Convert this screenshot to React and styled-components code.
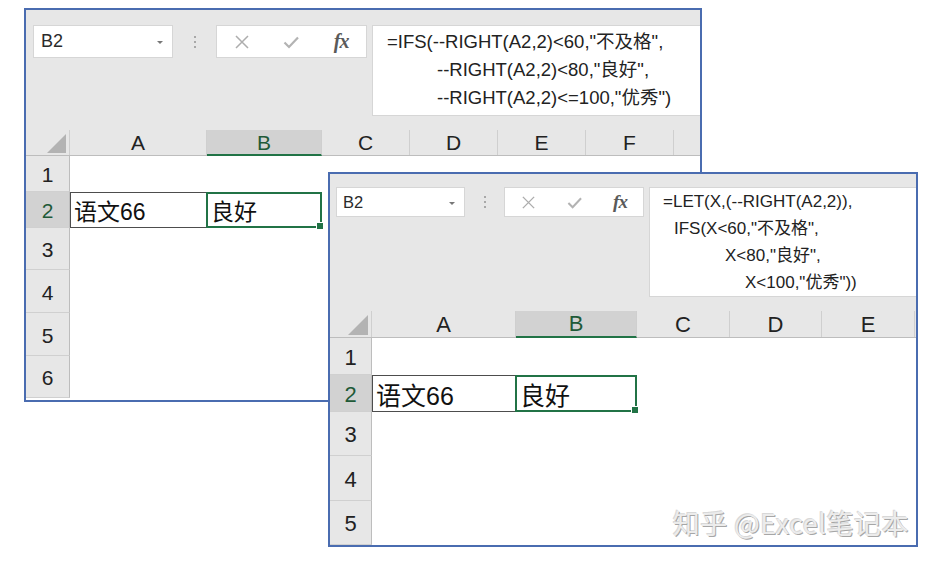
import styled, { createGlobalStyle } from 'styled-components';

const GlobalStyle = createGlobalStyle`
  html, body {
    margin: 0;
    padding: 0;
    background: #ffffff;
  }
  body {
    font-family: "Liberation Sans", "Noto Sans CJK SC", sans-serif;
    color: #222;
  }
`

const GREEN = '#217346'

const Canvas = styled.div`
  position: relative;
  width: 933px;
  height: 566px;
  overflow: hidden;
  background: #fff;
`

// windows sit on a free canvas, one over the other
const Window = styled.div`
  position: absolute;
  left: ${(p) => p.$left}px;
  top: ${(p) => p.$top}px;
  width: ${(p) => p.$width}px;
  height: ${(p) => p.$height}px;
  box-sizing: border-box;
  border: 2px solid #4a6cb0;
  background: #fff;
  overflow: hidden;
  z-index: ${(p) => p.$z};
  display: flex;
  flex-direction: column;
`

const Toolbar = styled.div`
  height: ${(p) => p.$h}px;
  flex: none;
  background: #e7e7e7;
  display: flex;
  align-items: flex-start;
  padding: ${(p) => p.$padTop}px 0 0 ${(p) => p.$padLeft}px;
  box-sizing: border-box;
`

const NameBox = styled.div`
  width: ${(p) => p.$w}px;
  height: ${(p) => p.$h}px;
  box-sizing: border-box;
  background: #fff;
  border: 1px solid #d6d6d6;
  display: flex;
  align-items: center;
  justify-content: space-between;
  padding: 0 9px 0 ${(p) => p.$padLeft}px;
  font-size: ${(p) => p.$fs}px;
  color: #2a2a2a;
  flex: none;
`

const Caret = styled.span`
  width: 0;
  height: 0;
  border-left: 3px solid transparent;
  border-right: 3px solid transparent;
  border-top: 3px solid #777;
  margin-top: 2px;
`

const DotsArea = styled.div`
  width: ${(p) => p.$w}px;
  height: ${(p) => p.$h}px;
  flex: none;
  display: flex;
  flex-direction: column;
  align-items: center;
  justify-content: center;
  gap: 3px;
`

const Dot = styled.span`
  width: 2px;
  height: 2px;
  background: #a8a8a8;
`

const FxBox = styled.div`
  width: ${(p) => p.$w}px;
  height: ${(p) => p.$h}px;
  box-sizing: border-box;
  flex: none;
  background: #fff;
  border: 1px solid #d6d6d6;
  display: grid;
  grid-template-columns: 1fr 1fr 1fr;
  align-items: center;
  justify-items: center;
`

const FxText = styled.span`
  font-family: "Liberation Serif", "DejaVu Serif", serif;
  font-style: italic;
  font-weight: bold;
  font-size: ${(p) => p.$fs}px;
  color: #5a5a5a;
  letter-spacing: -1px;
`

const FormulaBox = styled.div`
  flex: 1;
  height: ${(p) => p.$h}px;
  margin-left: ${(p) => p.$gap}px;
  box-sizing: border-box;
  background: #fff;
  border: 1px solid #d6d6d6;
  border-right: none;
  padding-top: ${(p) => p.$padTop}px;
  font-size: ${(p) => p.$fs}px;
  line-height: ${(p) => p.$lh}px;
  color: #222;
`

const FormulaLine = styled.div`
  white-space: pre;
  padding-left: ${(p) => p.$indent}px;
`

const HeaderRow = styled.div`
  display: flex;
  flex: none;
  height: ${(p) => p.$h}px;
  background: #e7e7e7;
  border-bottom: 1px solid #bdbdbd;
  box-sizing: border-box;
`

const Corner = styled.div`
  width: ${(p) => p.$w}px;
  flex: none;
  box-sizing: border-box;
  border-right: 1px solid #cfcfcf;
  display: flex;
  align-items: flex-end;
  justify-content: flex-end;
  padding: 0 3px 2px 0;
`

const CornerTriangle = styled.div`
  width: ${(p) => p.$s}px;
  height: ${(p) => p.$s}px;
  background: #b3b3b3;
  clip-path: polygon(100% 0, 100% 100%, 0 100%);
`

const ColHead = styled.div`
  width: ${(p) => p.$w}px;
  flex: none;
  box-sizing: border-box;
  border-right: 1px solid #cfcfcf;
  display: flex;
  align-items: center;
  justify-content: center;
  font-size: ${(p) => p.$fs}px;
  color: ${(p) => (p.$active ? '#1f5a38' : '#222')};
  background: ${(p) => (p.$active ? '#d2d2d2' : 'transparent')};
  border-bottom: ${(p) => (p.$active ? `2px solid ${GREEN}` : 'none')};
  margin-bottom: ${(p) => (p.$active ? '-1px' : '0')};
  padding-top: 1px;
`

const Body = styled.div`
  display: flex;
  flex-direction: column;
`

const Row = styled.div`
  display: flex;
  height: ${(p) => p.$h}px;
  flex: none;
`

const RowHead = styled.div`
  width: ${(p) => p.$w}px;
  flex: none;
  box-sizing: border-box;
  background: ${(p) => (p.$active ? '#d2d2d2' : '#e7e7e7')};
  border-right: 1px solid #bdbdbd;
  border-bottom: 1px solid #d0d0d0;
  display: flex;
  align-items: center;
  justify-content: center;
  font-size: ${(p) => p.$fs}px;
  color: ${(p) => (p.$active ? '#1f5a38' : '#222')};
  padding-top: 3px;
`

const Cell = styled.div`
  position: relative;
  width: ${(p) => p.$w}px;
  flex: none;
  box-sizing: border-box;
  display: flex;
  align-items: center;
  padding-left: 3px;
  font-size: ${(p) => p.$fs}px;
  color: #111;
  border: ${(p) =>
    p.$selected ? `2px solid ${GREEN}` : p.$boxed ? '1px solid #4d4d4d' : 'none'};
  margin-left: ${(p) => (p.$selected ? '-1px' : '0')};
`

const FillHandle = styled.span`
  position: absolute;
  right: -4px;
  bottom: -4px;
  width: 6px;
  height: 6px;
  background: ${GREEN};
  border: 1px solid #fff;
  box-sizing: content-box;
`

const Watermark = styled.div`
  position: absolute;
  right: 7px;
  bottom: 3px;
  font-family: "Noto Sans CJK SC", "Liberation Sans", sans-serif;
  font-size: 27px;
  color: #ececec;
  text-shadow: 1px 1px 0 #a6a6a6, -1px -1px 0 #d8d8d8;
  letter-spacing: 0.5px;
  white-space: nowrap;
`

const CrossIcon = ({ size }) => (
  <svg width={size} height={size} viewBox="0 0 16 16">
    <path d="M2 2 L14 14 M14 2 L2 14" stroke="#adadad" strokeWidth="1.5" fill="none" />
  </svg>
)

const CheckIcon = ({ size }) => (
  <svg width={size} height={size} viewBox="0 0 16 16">
    <path d="M1.5 8.5 L6 13 L15 3.5" stroke="#b3b3b3" strokeWidth="2.2" fill="none" />
  </svg>
)

const Sheet = ({ cfg, formula, watermark }) => (
  <Window $left={cfg.left} $top={cfg.top} $width={cfg.width} $height={cfg.height} $z={cfg.z}>
    <Toolbar $h={cfg.toolbarH} $padTop={cfg.boxTop} $padLeft={cfg.nameLeft}>
      <NameBox $w={cfg.nameW} $h={cfg.boxH} $fs={cfg.nameFs} $padLeft={cfg.namePad}>
        B2
        <Caret />
      </NameBox>
      <DotsArea $w={cfg.dotsW} $h={cfg.boxH}>
        <Dot />
        <Dot />
        <Dot />
      </DotsArea>
      <FxBox $w={cfg.fxW} $h={cfg.boxH}>
        <CrossIcon size={cfg.iconSize} />
        <CheckIcon size={cfg.iconSize} />
        <FxText $fs={cfg.fxFs}>fx</FxText>
      </FxBox>
      <FormulaBox
        $h={cfg.formulaH}
        $gap={cfg.formulaGap}
        $fs={cfg.formulaFs}
        $lh={cfg.formulaLh}
        $padTop={cfg.formulaPadTop}
      >
        {formula.map((line, i) => (
          <FormulaLine key={i} $indent={line.indent}>
            {line.text}
          </FormulaLine>
        ))}
      </FormulaBox>
    </Toolbar>
    <HeaderRow $h={cfg.headerH}>
      <Corner $w={cfg.rowHeadW}>
        <CornerTriangle $s={cfg.triangle} />
      </Corner>
      {cfg.cols.map((c) => (
        <ColHead key={c.name + c.w} $w={c.w} $fs={cfg.headFs} $active={c.name === 'B'}>
          {c.name}
        </ColHead>
      ))}
    </HeaderRow>
    <Body>
      {cfg.rows.map((h, i) => (
        <Row key={i} $h={h}>
          <RowHead $w={cfg.rowHeadW} $fs={cfg.headFs} $active={i === 1}>
            {i + 1}
          </RowHead>
          {i === 1 && (
            <>
              <Cell $w={cfg.cols[0].w} $fs={cfg.cellFs} $boxed>
                语文66
              </Cell>
              <Cell $w={cfg.cols[1].w + 1} $fs={cfg.cellFs} $selected>
                良好
                <FillHandle />
              </Cell>
            </>
          )}
        </Row>
      ))}
    </Body>
    {watermark && <Watermark>知乎 @Excel笔记本</Watermark>}
  </Window>
)

const first = {
  left: 24, top: 8, width: 678, height: 394, z: 1,
  toolbarH: 120, boxTop: 15, boxH: 33,
  nameLeft: 7, nameW: 140, nameFs: 18, namePad: 7,
  dotsW: 43, fxW: 151, fxFs: 20, iconSize: 16,
  formulaGap: 5, formulaH: 91, formulaFs: 18.5, formulaLh: 28, formulaPadTop: 2,
  headerH: 26, rowHeadW: 44, headFs: 21, triangle: 19, cellFs: 23,
  cols: [
    { name: 'A', w: 137 },
    { name: 'B', w: 115 },
    { name: 'C', w: 88 },
    { name: 'D', w: 88 },
    { name: 'E', w: 88 },
    { name: 'F', w: 88 },
    { name: '', w: 88 },
  ],
  rows: [36, 36, 42, 43, 43, 42],
}

const second = {
  left: 328, top: 172, width: 590, height: 375, z: 2,
  toolbarH: 137, boxTop: 13, boxH: 30,
  nameLeft: 6, nameW: 129, nameFs: 16.5, namePad: 6,
  dotsW: 39, fxW: 140, fxFs: 19, iconSize: 15,
  formulaGap: 5, formulaH: 110, formulaFs: 17, formulaLh: 27, formulaPadTop: 0,
  headerH: 27, rowHeadW: 42, headFs: 22, triangle: 20, cellFs: 25,
  cols: [
    { name: 'A', w: 144 },
    { name: 'B', w: 121 },
    { name: 'C', w: 93 },
    { name: 'D', w: 92 },
    { name: 'E', w: 93 },
    { name: '', w: 93 },
  ],
  rows: [37, 37, 44, 45, 44],
}

const formulaIfs = [
  { indent: 14, text: '=IFS(--RIGHT(A2,2)<60,"不及格",' },
  { indent: 64, text: '--RIGHT(A2,2)<80,"良好",' },
  { indent: 64, text: '--RIGHT(A2,2)<=100,"优秀")' },
]

const formulaLet = [
  { indent: 13, text: '=LET(X,(--RIGHT(A2,2)),' },
  { indent: 24, text: 'IFS(X<60,"不及格",' },
  { indent: 75, text: 'X<80,"良好",' },
  { indent: 95, text: 'X<100,"优秀"))' },
]

const App = () => {
  return (
    <>
      <GlobalStyle />
      <Canvas>
        <Sheet cfg={first} formula={formulaIfs} />
        <Sheet cfg={second} formula={formulaLet} watermark />
      </Canvas>
    </>
  )
}

export default App
